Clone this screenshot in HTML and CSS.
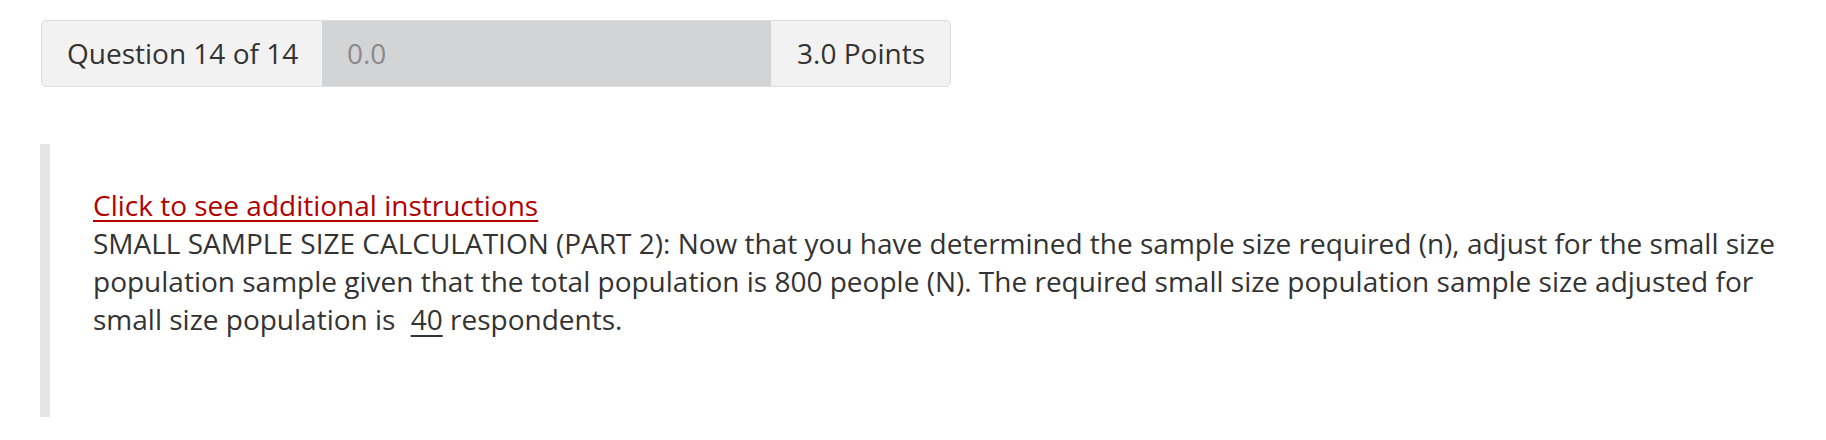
FILE: index.html
```html
<!DOCTYPE html>
<html>
<head>
<meta charset="utf-8">
<link rel="stylesheet" href="styles.css">
</head>
<body>
<div class="qbar">
  <div class="seg seg-title">Question 14 of 14</div>
  <div class="seg seg-score">0.0</div>
  <div class="seg seg-points">3.0 Points</div>
</div>
<div class="qbody">
  <a class="more" href="#">Click to see additional instructions</a>
  <div class="qtext">SMALL SAMPLE SIZE CALCULATION (PART 2): Now that you have determined the sample size required (n), adjust for the small size population sample given that the total population is 800 people (N). The required small size population sample size adjusted for small size population is <span class="blank">40</span> respondents.</div>
</div>
</body>
</html>
```
FILE: styles.css
```css
html, body {
  margin: 0;
  padding: 0;
  background: #ffffff;
}
body {
  font-family: "Open Sans", "Noto Sans", sans-serif;
  color: #333333;
}
.qbar {
  display: flex;
  margin: 20px 0 0 41px;
  width: 910px;
  height: 67px;
  box-sizing: border-box;
  border: 1px solid #dedede;
  border-radius: 5px;
  background: #f2f2f2;
  overflow: hidden;
  font-size: 28px;
  line-height: 65px;
}
.seg {
  padding: 0 25px;
  white-space: nowrap;
}
.seg-title {
  width: 280px;
  box-sizing: border-box;
}
.seg-score {
  width: 452px;
  box-sizing: border-box;
  background: #d3d4d6;
  color: #8a8a8a;
}
.seg-points {
  flex: 1;
  padding-left: 26px;
}
.qbody {
  margin: 57px 0 0 40px;
  border-left: 10px solid #e4e5e7;
  padding: 42px 40px 79px 43px;
  font-size: 28px;
  line-height: 38px;
}
.more {
  color: #b40000;
  text-decoration: underline;
  text-decoration-thickness: 2px;
  text-underline-offset: 4px;
}
.blank {
  display: inline-block;
  margin-left: 8px;
  text-decoration: underline;
  text-underline-offset: 5px;
}
```
